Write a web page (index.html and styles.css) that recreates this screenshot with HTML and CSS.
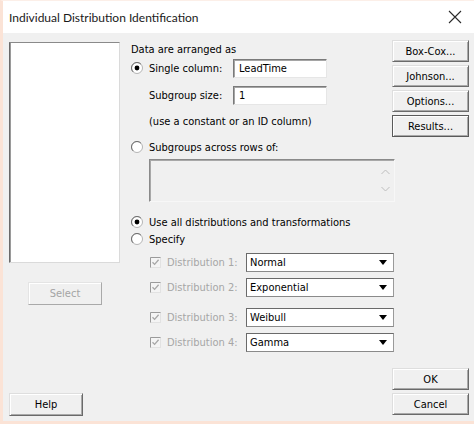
FILE: index.html
```html
<!DOCTYPE html>
<html>
<head>
<meta charset="utf-8">
<link rel="stylesheet" href="styles.css">
</head>
<body>
<div class="window">
  <div class="titlebar">
    <span class="title">Individual Distribution Identification</span>
    <svg class="close" width="14" height="14" viewBox="0 0 14 14"><path d="M1 1 L13 13 M13 1 L1 13" stroke="#2b2b2b" stroke-width="1.1" fill="none"/></svg>
  </div>
  <div class="content">
    <div class="col-left">
      <div class="listbox"></div>
      <div class="btn disabled select">Select</div>
      <div class="btn help">Help</div>
    </div>
    <div class="col-mid">
      <div class="row r0">Data are arranged as</div>
      <div class="row r1">
        <svg class="radio" width="12" height="12" viewBox="0 0 12 12"><circle cx="6" cy="6" r="5.5" fill="#fff" stroke="#b4b4b4"/><path d="M2.1 9.9 A5.5 5.5 0 0 1 9.9 2.1" stroke="#6e6e6e" fill="none"/><circle cx="6" cy="6" r="2.4" fill="#000"/></svg>
        <span class="lbl">Single column:</span>
        <div class="input">LeadTime</div>
      </div>
      <div class="row r2 indent">
        <span class="lbl">Subgroup size:</span>
        <div class="input">1</div>
      </div>
      <div class="row r3 indent">(use a constant or an ID column)</div>
      <div class="row r4">
        <svg class="radio" width="12" height="12" viewBox="0 0 12 12"><circle cx="6" cy="6" r="5.5" fill="#fff" stroke="#b4b4b4"/><path d="M2.1 9.9 A5.5 5.5 0 0 1 9.9 2.1" stroke="#6e6e6e" fill="none"/></svg>
        <span>Subgroups across rows of:</span>
      </div>
      <div class="textarea">
        <div class="scroll">
          <svg width="9" height="6" viewBox="0 0 9 6"><path d="M0.5 5 L4.5 1 L8.5 5" stroke="#bdbdbd" fill="none"/></svg>
          <svg width="9" height="6" viewBox="0 0 9 6"><path d="M0.5 1 L4.5 5 L8.5 1" stroke="#bdbdbd" fill="none"/></svg>
        </div>
      </div>
      <div class="row r5">
        <svg class="radio" width="12" height="12" viewBox="0 0 12 12"><circle cx="6" cy="6" r="5.5" fill="#fff" stroke="#b4b4b4"/><path d="M2.1 9.9 A5.5 5.5 0 0 1 9.9 2.1" stroke="#6e6e6e" fill="none"/><circle cx="6" cy="6" r="2.4" fill="#000"/></svg>
        <span>Use all distributions and transformations</span>
      </div>
      <div class="row r6">
        <svg class="radio" width="12" height="12" viewBox="0 0 12 12"><circle cx="6" cy="6" r="5.5" fill="#fff" stroke="#b4b4b4"/><path d="M2.1 9.9 A5.5 5.5 0 0 1 9.9 2.1" stroke="#6e6e6e" fill="none"/></svg>
        <span>Specify</span>
      </div>
      <div class="row dist d1">
        <svg class="check" width="11" height="11" viewBox="0 0 11 11"><rect x="0.5" y="0.5" width="10" height="10" fill="#f4f4f4" stroke="#e2e2e2"/><path d="M0.5 10.5 V0.5 H10.5" stroke="#9a9a9a" fill="none"/><path d="M2.5 5.2 L4.6 7.4 L8.6 2.8" stroke="#a6a6a6" stroke-width="1.3" fill="none"/></svg>
        <span class="dlbl">Distribution 1:</span>
        <div class="combo"><span>Normal</span><svg width="8" height="5" viewBox="0 0 8 5"><polygon points="0,0 8,0 4,5" fill="#000"/></svg></div>
      </div>
      <div class="row dist d2">
        <svg class="check" width="11" height="11" viewBox="0 0 11 11"><rect x="0.5" y="0.5" width="10" height="10" fill="#f4f4f4" stroke="#e2e2e2"/><path d="M0.5 10.5 V0.5 H10.5" stroke="#9a9a9a" fill="none"/><path d="M2.5 5.2 L4.6 7.4 L8.6 2.8" stroke="#a6a6a6" stroke-width="1.3" fill="none"/></svg>
        <span class="dlbl">Distribution 2:</span>
        <div class="combo"><span>Exponential</span><svg width="8" height="5" viewBox="0 0 8 5"><polygon points="0,0 8,0 4,5" fill="#000"/></svg></div>
      </div>
      <div class="row dist d3">
        <svg class="check" width="11" height="11" viewBox="0 0 11 11"><rect x="0.5" y="0.5" width="10" height="10" fill="#f4f4f4" stroke="#e2e2e2"/><path d="M0.5 10.5 V0.5 H10.5" stroke="#9a9a9a" fill="none"/><path d="M2.5 5.2 L4.6 7.4 L8.6 2.8" stroke="#a6a6a6" stroke-width="1.3" fill="none"/></svg>
        <span class="dlbl">Distribution 3:</span>
        <div class="combo"><span>Weibull</span><svg width="8" height="5" viewBox="0 0 8 5"><polygon points="0,0 8,0 4,5" fill="#000"/></svg></div>
      </div>
      <div class="row dist d4">
        <svg class="check" width="11" height="11" viewBox="0 0 11 11"><rect x="0.5" y="0.5" width="10" height="10" fill="#f4f4f4" stroke="#e2e2e2"/><path d="M0.5 10.5 V0.5 H10.5" stroke="#9a9a9a" fill="none"/><path d="M2.5 5.2 L4.6 7.4 L8.6 2.8" stroke="#a6a6a6" stroke-width="1.3" fill="none"/></svg>
        <span class="dlbl">Distribution 4:</span>
        <div class="combo"><span>Gamma</span><svg width="8" height="5" viewBox="0 0 8 5"><polygon points="0,0 8,0 4,5" fill="#000"/></svg></div>
      </div>
    </div>
    <div class="col-right">
      <div class="btn rbtn">Box-Cox...</div>
      <div class="btn rbtn">Johnson...</div>
      <div class="btn rbtn">Options...</div>
      <div class="btn rbtn default">Results...</div>
      <div class="btn rbtn ok">OK</div>
      <div class="btn rbtn cancel">Cancel</div>
    </div>
  </div>
</div>
</body>
</html>
```
FILE: styles.css
```css
* { box-sizing: border-box; }
html, body { margin: 0; padding: 0; }
body {
  width: 474px;
  height: 424px;
  overflow: hidden;
  background: #fbe6da;
  font-family: "DejaVu Sans Condensed", "DejaVu Sans", sans-serif;
  font-size: 11px;
  color: #000;
}
.window {
  width: 474px;
  height: 424px;
  border-left: 3px solid #fbe3d6;
  border-bottom: 3px solid #fbe3d6;
  border-top: 1px solid #fcefe8;
  background: #f0f0f0;
  display: flex;
  flex-direction: column;
}
.titlebar {
  height: 32px;
  flex: none;
  background: #fff;
  display: flex;
  align-items: center;
  justify-content: space-between;
  padding: 0 12px 0 6px;
}
.title {
  font-family: "Lato", "Noto Sans", sans-serif;
  font-size: 12px;
  color: #1a1a1a;
}
.content {
  flex: 1;
  display: flex;
  padding: 7px 0 5px 6px;
}
.col-left {
  width: 111px;
  flex: none;
  display: flex;
  flex-direction: column;
}
.listbox {
  margin-top: 2px;
  height: 221px;
  background: #fff;
  border: 1px solid;
  border-color: #8a8a8a #dadada #dadada #6a6a6a;
  box-shadow: inset 1px 0 #9a9a9a;
}
.btn {
  display: flex;
  align-items: center;
  justify-content: center;
  background: #f0f0f0;
  border: 1px solid;
  border-color: #dedede #6a6a6a #6a6a6a #dedede;
  box-shadow: inset 1px 1px #fff, inset -1px -1px #a9a9a9;
  font-size: 11px;
  color: #000;
}
.select {
  margin: 19px 0 0 19px;
  width: 74px;
  height: 23px;
  color: #a4a4a4;
  border-color: #e4e4e4 #a9a9a9 #a9a9a9 #e4e4e4;
  box-shadow: inset 1px 1px #fff;
}
.help {
  margin-top: auto;
  width: 74px;
  height: 23px;
}
.col-mid {
  width: 261px;
  flex: none;
  margin-left: 11px;
  display: flex;
  flex-direction: column;
}
.row {
  display: flex;
  align-items: center;
  white-space: nowrap;
  flex: none;
}
.radio { flex: none; margin-right: 6px; }
.indent { padding-left: 18px; }
.lbl { width: 84px; flex: none; }
.r0 { height: 18px; }
.r1 { height: 20px; }
.r2 { height: 20px; margin-top: 7px; }
.r3 { height: 14px; margin-top: 9px; }
.r4 { height: 14px; margin-top: 12px; }
.r5 { height: 14px; margin-top: 13px; }
.r6 { height: 14px; margin-top: 3px; }
.input {
  width: 94px;
  height: 19px;
  background: #fff;
  border: 1px solid;
  border-color: #7a7a7a #e6e6e6 #e6e6e6 #7a7a7a;
  box-shadow: inset 1px 1px #a5a5a5;
  padding-left: 5px;
  display: flex;
  align-items: center;
}
.textarea {
  flex: none;
  margin: 5px 0 0 18px;
  width: 246px;
  height: 43px;
  background: #f0f0f0;
  border: 1px solid;
  border-color: #8a8a8a #f7f7f7 #f7f7f7 #8a8a8a;
  box-shadow: inset 1px 1px #a8a8a8;
  display: flex;
  justify-content: flex-end;
}
.scroll {
  width: 18px;
  display: flex;
  flex-direction: column;
  align-items: center;
  justify-content: space-around;
  padding: 4px 0;
}
.dist { height: 19px; padding-left: 19px; }
.d1 { margin-top: 7px; }
.d2 { margin-top: 6px; }
.d3 { margin-top: 11px; }
.d4 { margin-top: 6px; }
.check { flex: none; }
.dlbl { width: 79px; flex: none; margin-left: 6px; color: #a6a6a6; }
.combo {
  width: 148px;
  height: 19px;
  flex: none;
  background: #fff;
  border: 1px solid;
  border-color: #6a6a6a #9a9a9a #8a8a8a #6a6a6a;
  display: flex;
  align-items: center;
  justify-content: space-between;
  padding: 0 6px 0 3px;
  color: #000;
}
.col-right {
  width: 77px;
  flex: none;
  display: flex;
  flex-direction: column;
}
.rbtn { height: 22px; margin-bottom: 3px; }
.default {
  border-color: #5a5a5a;
  box-shadow: inset 1px 1px #fff, inset -1px -1px #a9a9a9;
}
.ok { margin-top: auto; }
.cancel { margin-bottom: 1px; }
```
